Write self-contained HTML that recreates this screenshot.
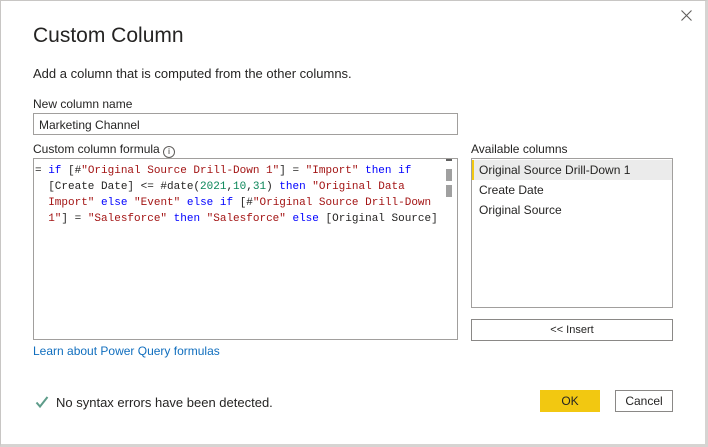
<!DOCTYPE html>
<html><head><style>
body{margin:0;width:708px;height:447px;background:#fff;font-family:"Liberation Sans",sans-serif;color:#252423;overflow:hidden;position:relative}
.dlg{position:absolute;left:0;top:0;border:1px solid #c8c6c4;border-right:3px solid #d6d4d2;border-bottom:3px solid #d6d4d2;box-sizing:border-box;width:708px;height:447px}
.a{position:absolute}
h1{position:absolute;left:33px;top:24px;margin:0;font-size:21px;font-weight:normal;color:#252423}
.lbl{font-size:12px;color:#252423}
.inp{position:absolute;border:1px solid #a19f9d;box-sizing:border-box}
.code{font-family:"Liberation Mono",monospace;font-size:11px;line-height:16px;white-space:pre;color:#252423}
.k{color:#0000ff}.s{color:#a31515}.n{color:#098658}
.btn{position:absolute;box-sizing:border-box;font-size:12px;text-align:center}
</style></head><body>
<div class="dlg"></div>
<svg class="a" style="left:681px;top:10px" width="11" height="11"><path d="M0.5 0.5 L10.5 10.5 M10.5 0.5 L0.5 10.5" stroke="#605e5c" stroke-width="1.1" fill="none"/></svg>
<h1>Custom Column</h1>
<div class="a" style="left:33px;top:66px;font-size:13px">Add a column that is computed from the other columns.</div>
<div class="a lbl" style="left:33px;top:97px">New column name</div>
<div class="inp" style="left:33px;top:113px;width:425px;height:22px"><div class="a" style="left:5px;top:4px;font-size:12px">Marketing Channel</div></div>
<div class="a lbl" style="left:33px;top:142px">Custom column formula <span style="display:inline-block;width:10px;height:10px;border:1px solid #605e5c;border-radius:50%;font-size:8px;line-height:10px;text-align:center;vertical-align:-1px">i</span></div>
<div class="inp" style="left:33px;top:158px;width:425px;height:182px">
<div class="a code" style="left:1px;top:4px">= <span class="k">if</span> [#<span class="s">"Original Source Drill-Down 1"</span>] = <span class="s">"Import"</span> <span class="k">then if</span>
  [Create Date] &lt;= #date(<span class="n">2021</span>,<span class="n">10</span>,<span class="n">31</span>) <span class="k">then</span> <span class="s">"Original Data</span>
<span class="s">  Import"</span> <span class="k">else</span> <span class="s">"Event"</span> <span class="k">else if</span> [#<span class="s">"Original Source Drill-Down</span>
<span class="s">  1"</span>] = <span class="s">"Salesforce"</span> <span class="k">then</span> <span class="s">"Salesforce"</span> <span class="k">else</span> [Original Source]</div>
<div class="a" style="left:412px;top:0;width:6px;height:2px;background:#606060"></div>
<div class="a" style="left:412px;top:10px;width:6px;height:12px;background:#a0a0a0"></div>
<div class="a" style="left:412px;top:26px;width:6px;height:12px;background:#a0a0a0"></div>
</div>
<div class="a" style="left:33px;top:344px;font-size:12px;color:#106ebe">Learn about Power Query formulas</div>
<div class="a lbl" style="left:471px;top:142px">Available columns</div>
<div class="inp" style="left:471px;top:158px;width:202px;height:150px">
<div class="a" style="left:0;top:1px;width:200px;height:20px;background:#ebebeb;border-left:2px solid #f2c811;box-sizing:border-box"></div>
<div class="a" style="left:7px;top:4px;font-size:12px">Original Source Drill-Down 1</div>
<div class="a" style="left:7px;top:24px;font-size:12px">Create Date</div>
<div class="a" style="left:7px;top:44px;font-size:12px">Original Source</div>
</div>
<div class="btn" style="left:471px;top:319px;width:202px;height:22px;border:1px solid #8a8886;line-height:20px;font-size:11px">&lt;&lt; Insert</div>
<svg class="a" style="left:35px;top:395px" width="14" height="14"><path d="M1.5 7.5 L5 11.5 L12.5 2" stroke="#5e9c8a" stroke-width="2" fill="none"/></svg>
<div class="a" style="left:56px;top:395px;font-size:13px">No syntax errors have been detected.</div>
<div class="btn" style="left:540px;top:390px;width:60px;height:22px;background:#f2c811;line-height:22px">OK</div>
<div class="btn" style="left:615px;top:390px;width:58px;height:22px;border:1px solid #8a8886;line-height:20px">Cancel</div>
</body></html>
